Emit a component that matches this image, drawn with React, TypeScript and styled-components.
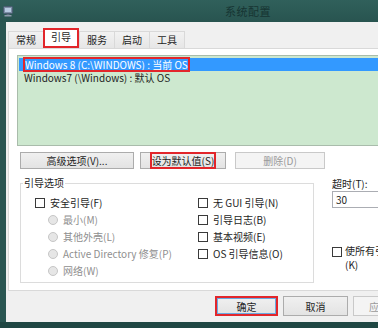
import React from 'react';
import styled, { createGlobalStyle } from 'styled-components';

const GlobalStyle = createGlobalStyle`
  html, body {
    margin: 0;
    padding: 0;
    background: #1f4744;
  }
  body {
    font-family: "Noto Sans CJK SC", "Noto Sans", sans-serif;
    font-size: 10px;
    color: #1e1e1e;
  }
`;

const Frame = styled.div`
  width: 378px;
  height: 328px;
  overflow: hidden;
  display: flex;
  flex-direction: column;
  background: #2a5652;
`;

const TitleBar = styled.div`
  flex: none;
  height: 22px;
  display: flex;
  align-items: center;
  padding-left: 3px;
  background: linear-gradient(#30605b, #285450);
`;

const Title = styled.div`
  margin-left: 212px;
  font-size: 11px;
  line-height: 14px;
  color: #163432;
  letter-spacing: 0.5px;
`;

const Body = styled.div`
  flex: none;
  width: 480px;
  height: 300px;
  margin-left: 6px;
  padding-top: 6px;
  box-sizing: border-box;
  background: #f0f0f0;
`;

const BottomEdge = styled.div`
  flex: 1;
  background: #1f4743;
`;

const TabStrip = styled.div`
  display: flex;
  align-items: flex-end;
  height: 20px;
  padding-left: 2px;
  position: relative;
  z-index: 1;
`;

const Tab = styled.div<{ $active?: boolean }>`
  width: 36px;
  height: ${(p) => (p.$active ? 20 : 17)}px;
  box-sizing: border-box;
  text-align: center;
  line-height: ${(p) => (p.$active ? 14 : 16)}px;
  border: ${(p) => (p.$active ? '2px solid #e2262b' : '1px solid #d9d9d9')};
  border-bottom: ${(p) => (p.$active ? '2px solid #e2262b' : 'none')};
  background: ${(p) => (p.$active ? '#ffffff' : 'linear-gradient(#f2f2f2, #e6e6e6)')};
  margin-right: ${(p) => (p.$active ? 0 : -1)}px;
`;

const Panel = styled.div`
  width: 470px;
  height: 243px;
  margin-left: 2px;
  padding: 6px 0 0 8px;
  box-sizing: border-box;
  border: 1px solid #d9d9d9;
  background: #ffffff;
`;

const ListBox = styled.div`
  height: 91px;
  box-sizing: border-box;
  padding: 2px 0 0 1px;
  border: 1px solid #a9bcab;
  background: #cde8cf;
`;

const ListRow = styled.div<{ $selected?: boolean }>`
  height: 13px;
  line-height: 13px;
  padding-left: 5px;
  white-space: nowrap;
  color: ${(p) => (p.$selected ? '#ffffff' : '#1e1e1e')};
  background: ${(p) => (p.$selected ? '#3399ff' : 'transparent')};
`;

const Marked = styled.span`
  display: inline-block;
  outline: 2px solid #e2262b;
  outline-offset: -1px;
  padding: 0 1px;
`;

const ButtonRow = styled.div`
  display: flex;
  margin-top: 6px;
  padding-left: 3px;
`;

const Button = styled.div<{ $width: number; $space?: number; $disabled?: boolean; $height?: number }>`
  width: ${(p) => p.$width}px;
  height: ${(p) => p.$height ?? 17}px;
  margin-left: ${(p) => p.$space ?? 0}px;
  box-sizing: border-box;
  display: flex;
  align-items: center;
  justify-content: center;
  border: 1px solid ${(p) => (p.$disabled ? '#c9c9c9' : '#acacac')};
  background: ${(p) => (p.$disabled ? '#f4f4f4' : 'linear-gradient(#f0f0f0, #e3e3e3)')};
  color: ${(p) => (p.$disabled ? '#9a9a9a' : '#1e1e1e')};
`;

const DefaultButton = styled(Button)`
  border: 2px solid #e2262b;
  box-shadow: inset 0 0 0 1px #6aa9e0;
`;

const OptionsRow = styled.div`
  display: flex;
  align-items: flex-start;
  margin-top: 8px;
  padding-left: 3px;
`;

const GroupBox = styled.fieldset`
  width: 305px;
  height: 106px;
  margin: 0;
  padding: 0 0 0 2px;
  box-sizing: border-box;
  border: 1px solid #dcdcdc;
`;

const Legend = styled.legend`
  padding: 0 1px;
  line-height: 12px;
  color: #1e1e1e;
`;

const OptionGrid = styled.div`
  display: grid;
  grid-template-columns: 163px 1fr;
  grid-template-rows: repeat(5, 17px);
  grid-auto-flow: column;
  padding: 5px 0 0 12px;
`;

const Option = styled.div<{ $indent?: number; $disabled?: boolean }>`
  display: flex;
  align-items: center;
  gap: 5px;
  padding-left: ${(p) => p.$indent ?? 0}px;
  white-space: nowrap;
  color: ${(p) => (p.$disabled ? '#8f8f8f' : '#1e1e1e')};
`;

const CheckBox = styled.span`
  flex: none;
  width: 10px;
  height: 10px;
  box-sizing: border-box;
  border: 1px solid #3a3a3a;
  background: #ffffff;
`;

const Radio = styled.span`
  flex: none;
  width: 10px;
  height: 10px;
  box-sizing: border-box;
  border-radius: 50%;
  border: 1px solid #c6c6c6;
  background: #e6e6e6;
`;

const SideColumn = styled.div`
  display: flex;
  flex-direction: column;
  margin-left: 18px;
`;

const FieldLabel = styled.div`
  margin-top: 1px;
  line-height: 12px;
`;

const TextInput = styled.div`
  width: 80px;
  height: 17px;
  margin-top: 1px;
  padding-left: 3px;
  box-sizing: border-box;
  line-height: 15px;
  border: 1px solid #abadb3;
  background: #ffffff;
`;

const PermanentOption = styled.div`
  display: flex;
  align-items: flex-start;
  gap: 3px;
  margin-top: 36px;
  line-height: 14px;

  & > span {
    margin-top: 3px;
  }
`;

const PermanentText = styled.div`
  width: 132px;
`;

const Footer = styled.div`
  display: flex;
  gap: 5px;
  margin-top: 5px;
  padding-left: 209px;
`;

function AppIcon() {
  return (
    <svg width="10" height="11" viewBox="0 0 10 11">
      <rect x="0.5" y="0.5" width="9" height="7" rx="1" fill="#7d8fa6" stroke="#4b5d72" />
      <rect x="2" y="2" width="6" height="4" fill="#b8cbe2" />
      <rect x="3.5" y="8" width="3" height="1" fill="#5b6b7d" />
      <rect x="1.5" y="9" width="7" height="1.5" fill="#8d9aab" />
    </svg>
  );
}

const tabs = ['常规', '引导', '服务', '启动', '工具'];

export default function App() {
  return (
    <>
      <GlobalStyle />
      <Frame>
        <TitleBar>
          <AppIcon />
          <Title>系统配置</Title>
        </TitleBar>
        <Body>
          <TabStrip>
            {tabs.map((t) => (
              <Tab key={t} $active={t === '引导'}>
                {t}
              </Tab>
            ))}
          </TabStrip>
          <Panel>
            <ListBox>
              <ListRow $selected>
                <Marked>Windows 8 (C:\WINDOWS) : 当前 OS</Marked>
              </ListRow>
              <ListRow>Windows7 (\Windows) : 默认 OS</ListRow>
            </ListBox>
            <ButtonRow>
              <Button $width={114}>高级选项(V)...</Button>
              <Button $width={86} $space={6}>
                <Marked>设为默认值(S)</Marked>
              </Button>
              <Button $width={90} $space={9} $disabled>
                删除(D)
              </Button>
            </ButtonRow>
            <OptionsRow>
              <GroupBox>
                <Legend>引导选项</Legend>
                <OptionGrid>
                  <Option>
                    <CheckBox />
                    安全引导(F)
                  </Option>
                  <Option $indent={13} $disabled>
                    <Radio />
                    最小(M)
                  </Option>
                  <Option $indent={13} $disabled>
                    <Radio />
                    其他外壳(L)
                  </Option>
                  <Option $indent={13} $disabled>
                    <Radio />
                    Active Directory 修复(P)
                  </Option>
                  <Option $indent={13} $disabled>
                    <Radio />
                    网络(W)
                  </Option>
                  <Option>
                    <CheckBox />
                    无 GUI 引导(N)
                  </Option>
                  <Option>
                    <CheckBox />
                    引导日志(B)
                  </Option>
                  <Option>
                    <CheckBox />
                    基本视频(E)
                  </Option>
                  <Option>
                    <CheckBox />
                    OS 引导信息(O)
                  </Option>
                </OptionGrid>
              </GroupBox>
              <SideColumn>
                <FieldLabel>超时(T):</FieldLabel>
                <TextInput>30</TextInput>
                <PermanentOption>
                  <CheckBox />
                  <PermanentText>使所有引导设置成为永久设置(K)</PermanentText>
                </PermanentOption>
              </SideColumn>
            </OptionsRow>
          </Panel>
          <Footer>
            <DefaultButton $width={63} $height={20}>
              确定
            </DefaultButton>
            <Button $width={65} $height={20}>
              取消
            </Button>
            <Button $width={65} $height={20} $disabled>
              应用(A)
            </Button>
          </Footer>
        </Body>
        <BottomEdge />
      </Frame>
    </>
  );
}
